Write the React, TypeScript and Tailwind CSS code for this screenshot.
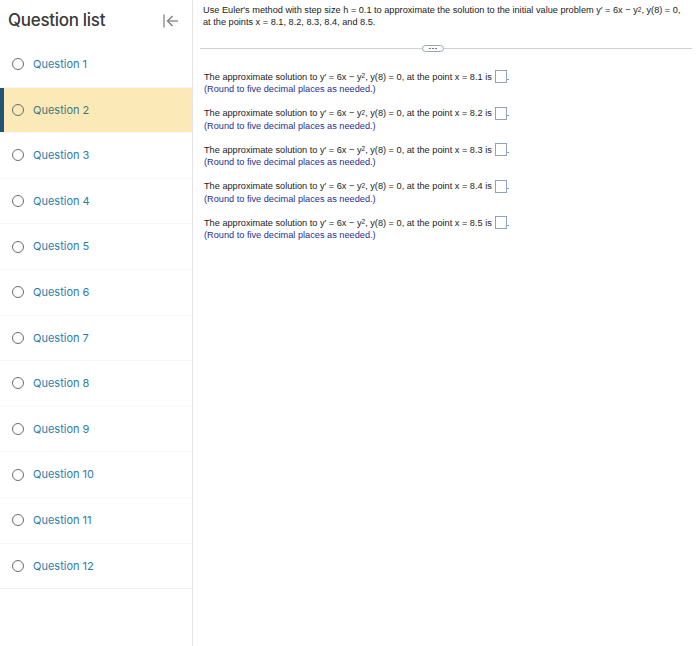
import { useState } from 'react';

const points = ['8.1', '8.2', '8.3', '8.4', '8.5'];

function Eq() {
  return (
    <>
      y′ = 6x − y<sup className="text-[6.5px] relative -top-[1.5px]">2</sup>, y(8) = 0
    </>
  );
}

export default function App() {
  const [active, setActive] = useState(2);
  const [answers, setAnswers] = useState<string[]>(points.map(() => ''));

  return (
    <div
      className="flex w-[700px] h-[646px] bg-white text-[#333]"
      style={{ fontFamily: '"Liberation Sans", Arial, sans-serif' }}
    >
      {/* Sidebar */}
      <div className="w-[193px] shrink-0 border-r border-[#e4e4e4] flex flex-col">
        <div className="h-[41px] flex items-center justify-between pl-[8px] pr-[12px]">
          <h1
            className="text-[17px] font-medium text-[#3a3a3a] tracking-[-0.3px]"
            style={{ fontFamily: 'Inter, "Noto Sans", sans-serif' }}
          >
            Question list
          </h1>
          <svg width="18" height="16" viewBox="0 0 18 16" fill="none" stroke="#777" strokeWidth="1.2">
            <path d="M2 1.5v13" />
            <path d="M16 8H5.5" />
            <path d="M10.5 3 5.5 8l5 5" />
          </svg>
        </div>
        <div className="flex flex-col border-b border-[#f0f0f0]">
          {Array.from({ length: 12 }, (_, i) => i + 1).map((n) => (
            <button
              key={n}
              onClick={() => setActive(n)}
              className={`relative h-[45.6px] flex items-center gap-[9px] pl-[12px] text-left border-t border-[#f8f8f8] first:border-t-0 ${
                active === n ? 'bg-[#fbe9b8]' : 'bg-white'
              }`}
            >
              {active === n && <span className="absolute left-0 top-0 bottom-0 w-[4px] bg-[#1f5573]" />}
              <span className="w-[12px] h-[12px] rounded-full border-[1.5px] border-[#6b6b6b]" />
              <span
                className={`text-[11px] ${active === n ? 'text-[#3b7a78]' : 'text-[#2f7ca6]'}`}
                style={{ fontFamily: 'Inter, "Noto Sans", sans-serif' }}
              >
                Question {n}
              </span>
            </button>
          ))}
        </div>
      </div>

      {/* Main */}
      <div className="flex-1 pl-[10px] pr-[8px] pt-[4px] text-[9.2px] leading-[12px] text-[#222]">
        <p>
          Use Euler's method with step size h = 0.1 to approximate the solution to the initial value problem <Eq />,
          <br />
          at the points x = 8.1, 8.2, 8.3, 8.4, and 8.5.
        </p>

        <div className="relative mt-[20px] mb-[21px] h-[1px] bg-[#cfcfcf] -ml-[3px]">
          <span className="absolute left-[222px] -top-[3px] w-[22px] h-[7px] rounded-full border border-[#9aa] bg-white flex items-center justify-center gap-[1.5px]">
            <span className="w-[1.5px] h-[1.5px] bg-[#667] rounded-full" />
            <span className="w-[1.5px] h-[1.5px] bg-[#667] rounded-full" />
            <span className="w-[1.5px] h-[1.5px] bg-[#667] rounded-full" />
          </span>
        </div>

        <div className="flex flex-col gap-[11.6px] pl-[1px]">
          {points.map((p, i) => (
            <div key={p}>
              <div className="flex items-center">
                <span>
                  The approximate solution to <Eq />, at the point x = {p} is
                </span>
                <input
                  value={answers[i]}
                  onChange={(e) => {
                    const next = [...answers];
                    next[i] = e.target.value;
                    setAnswers(next);
                  }}
                  className="ml-[3px] w-[12px] h-[13px] border border-[#8ea3c4] outline-none"
                />
                <span>.</span>
              </div>
              <p className="text-[#1e2f8f]">(Round to five decimal places as needed.)</p>
            </div>
          ))}
        </div>
      </div>
    </div>
  );
}
